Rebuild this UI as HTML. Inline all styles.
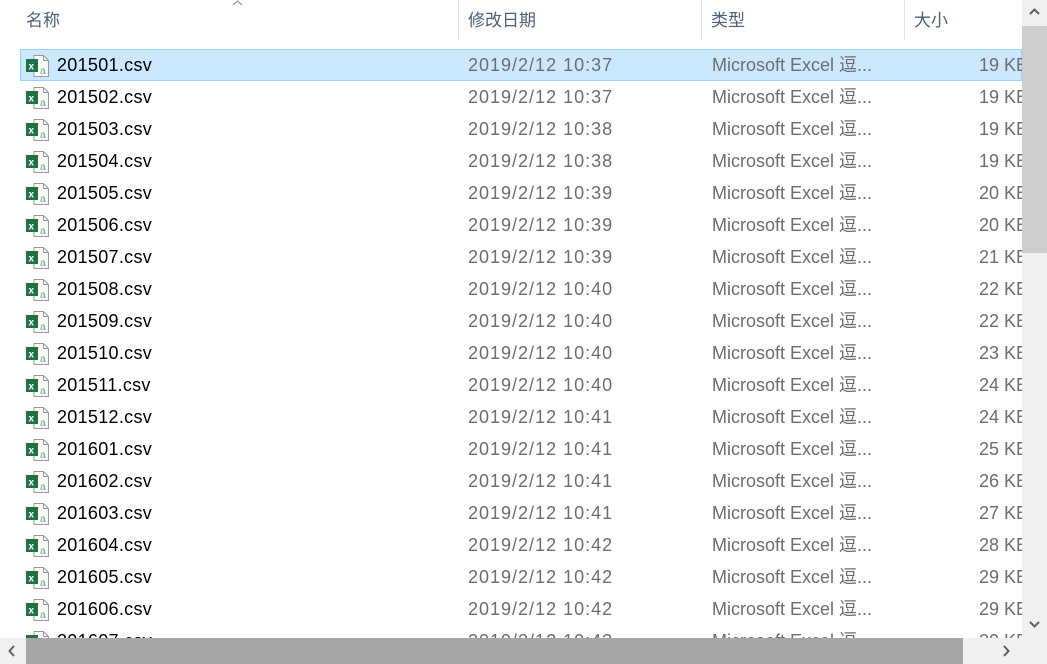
<!DOCTYPE html><html><head><style>
body{margin:0;width:1047px;height:664px;overflow:hidden;background:#fff;font-family:"Liberation Sans","Noto Sans CJK SC",sans-serif;position:relative}
.h{position:absolute;top:10px;font-size:17px;color:#4c607a;line-height:22px}
.sep{position:absolute;top:0;height:40px;width:1px;background:#e5e5e5}
.row{position:absolute;left:20px;width:1002px;height:32px;font-size:18px;box-sizing:border-box}
.row span{position:absolute;top:5px;white-space:nowrap;line-height:22px;height:22px}
.n{left:37px;color:#000;letter-spacing:0.3px}.d{left:448px;color:#6d6d6d;letter-spacing:1px}.t{left:692px;color:#6d6d6d}.s{left:959px;color:#6d6d6d}
.ic{position:absolute;left:6px;top:5px}
.sel{background:#cce8ff;box-shadow:inset 0 0 0 1px #99d1ff}
</style></head><body>
<div class="h" style="left:26px">名称</div>
<svg style="position:absolute;left:232px;top:0" width="11" height="6"><path d="M1 5L5.5 1L10 5" stroke="#888" stroke-width="1" fill="none"/></svg>
<div class="sep" style="left:458px"></div><div class="h" style="left:468px">修改日期</div>
<div class="sep" style="left:701px"></div><div class="h" style="left:711px">类型</div>
<div class="sep" style="left:904px"></div><div class="h" style="left:914px">大小</div>
<div id="rows"></div>
<div style="position:absolute;left:1022px;top:0;width:25px;height:638px;background:#f0f0f0">
<div style="position:absolute;top:26px;left:0;width:25px;height:227px;background:#cdcdcd"></div>
<svg style="position:absolute;left:7px;top:8px" width="11" height="8"><path d="M1 6L5.5 1.5L10 6" stroke="#606060" stroke-width="2" fill="none"/></svg>
<svg style="position:absolute;left:7px;top:620px" width="11" height="8"><path d="M1 2L5.5 6.5L10 2" stroke="#606060" stroke-width="2" fill="none"/></svg>
</div>
<div style="position:absolute;left:0;top:638px;width:1022px;height:26px;background:#f0f0f0">
<div style="position:absolute;left:26px;top:0;width:937px;height:26px;background:#a6a6a6"></div>
<svg style="position:absolute;left:8px;top:7px" width="8" height="12"><path d="M6 1L1.5 6L6 11" stroke="#606060" stroke-width="2" fill="none"/></svg>
<svg style="position:absolute;left:1002px;top:7px" width="8" height="12"><path d="M2 1L6.5 6L2 11" stroke="#606060" stroke-width="2" fill="none"/></svg>
</div>
<div style="position:absolute;left:1022px;top:638px;width:25px;height:26px;background:#f0f0f0"></div>
<script>
var d=[["201501","10:37","19"],["201502","10:37","19"],["201503","10:38","19"],["201504","10:38","19"],["201505","10:39","20"],["201506","10:39","20"],["201507","10:39","21"],["201508","10:40","22"],["201509","10:40","22"],["201510","10:40","23"],["201511","10:40","24"],["201512","10:41","24"],["201601","10:41","25"],["201602","10:41","26"],["201603","10:41","27"],["201604","10:42","28"],["201605","10:42","29"],["201606","10:42","29"],["201607","10:43","30"]];
var ic='<svg class="ic" width="24" height="24" viewBox="0 0 24 24"><path d="M8 1.5H17.5L22.5 6.5V22.5H8Z" fill="#fff" stroke="#999"/><path d="M17.5 1.5V6.5H22.5" fill="none" stroke="#999"/><rect x="0" y="5" width="12" height="13" fill="#1e7145"/><text x="2.5" y="15.5" font-size="10" font-weight="bold" fill="#fff" font-family="Liberation Sans">x</text><text x="14" y="20" font-size="10" fill="#5aa36e" font-family="Liberation Sans">a</text></svg>';
var h='';d.forEach(function(r,i){h+='<div class="row'+(i==0?' sel':'')+'" style="top:'+(49+i*32)+'px">'+ic+'<span class="n">'+r[0]+'.csv</span><span class="d">2019/2/12 '+r[1]+'</span><span class="t">Microsoft Excel 逗...</span><span class="s">'+r[2]+' KB</span></div>'});
document.getElementById('rows').innerHTML=h;
</script>
</body></html>
